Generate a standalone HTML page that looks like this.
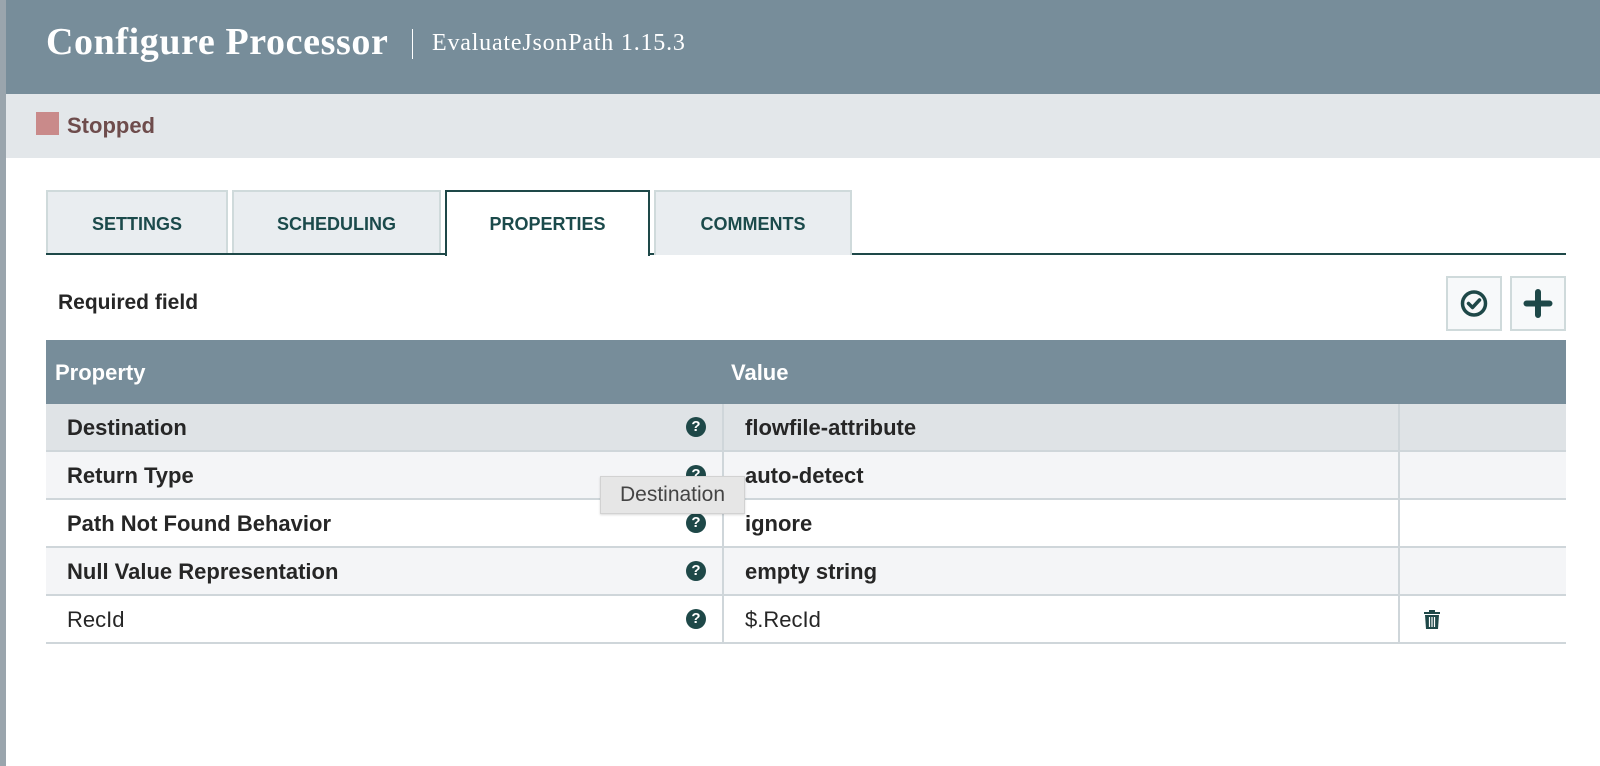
<!DOCTYPE html>
<html><head><style>
*{box-sizing:border-box;margin:0;padding:0}
body{width:1600px;height:766px;position:relative;background:#fff;font-family:"Liberation Sans",sans-serif;overflow:hidden}
.abs{position:absolute}
.strip{left:0;top:0;width:6px;height:766px;background:#9aa5ad}
.hdr{left:6px;top:0;width:1594px;height:94px;background:#778d9a}
.title{left:46px;top:20px;font-family:"Liberation Serif",serif;font-weight:bold;font-size:38px;letter-spacing:0.6px;color:#fff}
.sep{left:412px;top:29px;width:1px;height:30px;background:#fff}
.sub{left:432px;top:30px;font-family:"Liberation Serif",serif;font-size:24px;letter-spacing:0.8px;color:#fff}
.band{left:6px;top:94px;width:1594px;height:64px;background:#e3e7ea}
.tab{top:190px;height:65px;background:#e9edf0;border:2px solid #cfdadb;border-bottom:none;color:#1b4a4b;font-weight:bold;font-size:18px;text-align:center;line-height:64px}
.tab.act{background:#fff;border:2px solid #1e4848;border-bottom:none;height:66px}
.tabline{top:253px;left:46px;width:1520px;height:2px;background:#1e4848}
.req{left:58px;top:291px;font-weight:bold;font-size:21px;color:#262626}
.btn{top:276px;width:56px;height:55px;border:2px solid #cfdadb;background:#f7f9fa}
.th{left:46px;top:340px;width:1520px;height:64px;background:#778d9a;color:#fff;font-weight:bold;font-size:22px}
.row{left:46px;width:1520px;height:48px;border-bottom:2px solid #cfd6da;font-size:22px;color:#262626}
.row span{position:absolute;top:11px}
.q{position:absolute;left:640px;top:13px;width:20px;height:20px;border-radius:50%;background:#1e4848;color:#fff;font-weight:bold;font-size:15px;text-align:center;line-height:20px}
.v1{left:676px;width:2px;height:100%;top:0;background:#cfd6da;position:absolute}
.v2{left:1352px;width:2px;height:100%;top:0;background:#cfd6da;position:absolute}
</style></head><body>
<div class="abs strip"></div>
<div class="abs hdr"></div>
<div class="abs title">Configure Processor</div>
<div class="abs sep"></div>
<div class="abs sub">EvaluateJsonPath 1.15.3</div>
<div class="abs band"></div>
<div class="abs" style="left:36px;top:112px;width:23px;height:23px;background:#c98a8a"></div>
<div class="abs" style="left:67px;top:113px;font-weight:bold;font-size:22px;color:#6e4c4c">Stopped</div>
<div class="abs tab" style="left:46px;width:182px">SETTINGS</div>
<div class="abs tab" style="left:232px;width:209px">SCHEDULING</div>
<div class="abs tabline"></div>
<div class="abs tab act" style="left:445px;width:205px">PROPERTIES</div>
<div class="abs tab" style="left:654px;width:198px">COMMENTS</div>
<div class="abs req">Required field</div>
<div class="abs btn" style="left:1446px"><svg width="52" height="51" viewBox="0 0 52 51"><circle cx="26" cy="25.5" r="11.5" fill="none" stroke="#1e4848" stroke-width="3.5"/><path d="M20.5 25.5l4 4 7-7.5" fill="none" stroke="#1e4848" stroke-width="3.5" stroke-linecap="round" stroke-linejoin="round"/></svg></div>
<div class="abs btn" style="left:1510px"><svg width="52" height="51" viewBox="0 0 52 51"><path d="M26 14v23M14.5 25.5h23" stroke="#1e4848" stroke-width="6" stroke-linecap="round"/></svg></div>
<div class="abs th"><span style="position:absolute;left:9px;top:20px">Property</span><span style="position:absolute;left:685px;top:20px">Value</span></div>
<div class="abs row" style="top:404px;background:#dfe3e6;font-weight:bold"><span style="left:21px">Destination</span><div class="q">?</div><div class="v1"></div><span style="left:699px">flowfile-attribute</span><div class="v2"></div></div>
<div class="abs row" style="top:452px;background:#f4f5f7;font-weight:bold"><span style="left:21px">Return Type</span><div class="q">?</div><div class="v1"></div><span style="left:699px">auto-detect</span><div class="v2"></div></div>
<div class="abs row" style="top:500px;background:#fff;font-weight:bold"><span style="left:21px">Path Not Found Behavior</span><div class="q">?</div><div class="v1"></div><span style="left:699px">ignore</span><div class="v2"></div></div>
<div class="abs row" style="top:548px;background:#f4f5f7;font-weight:bold"><span style="left:21px">Null Value Representation</span><div class="q">?</div><div class="v1"></div><span style="left:699px">empty string</span><div class="v2"></div></div>
<div class="abs row" style="top:596px;background:#fff"><span style="left:21px">RecId</span><div class="q">?</div><div class="v1"></div><span style="left:699px">$.RecId</span><div class="v2"></div>
<svg style="position:absolute;left:1377px;top:12px" width="18" height="22" viewBox="0 0 18 22"><path d="M6 2h6v2h5v2H1V4h5z" fill="#1e4848"/><path d="M2 7h14l-1 14H3z" fill="#1e4848"/><path d="M6.5 9v10M9 9v10M11.5 9v10" stroke="#fff" stroke-width="1.2"/></svg></div>
<div class="abs" style="left:600px;top:476px;width:145px;height:38px;background:#e6e6e6;border:1px solid #d2d2d2;box-shadow:0 1px 2px rgba(0,0,0,.15);font-size:21px;color:#444;line-height:36px;text-align:center">Destination</div>
</body></html>
